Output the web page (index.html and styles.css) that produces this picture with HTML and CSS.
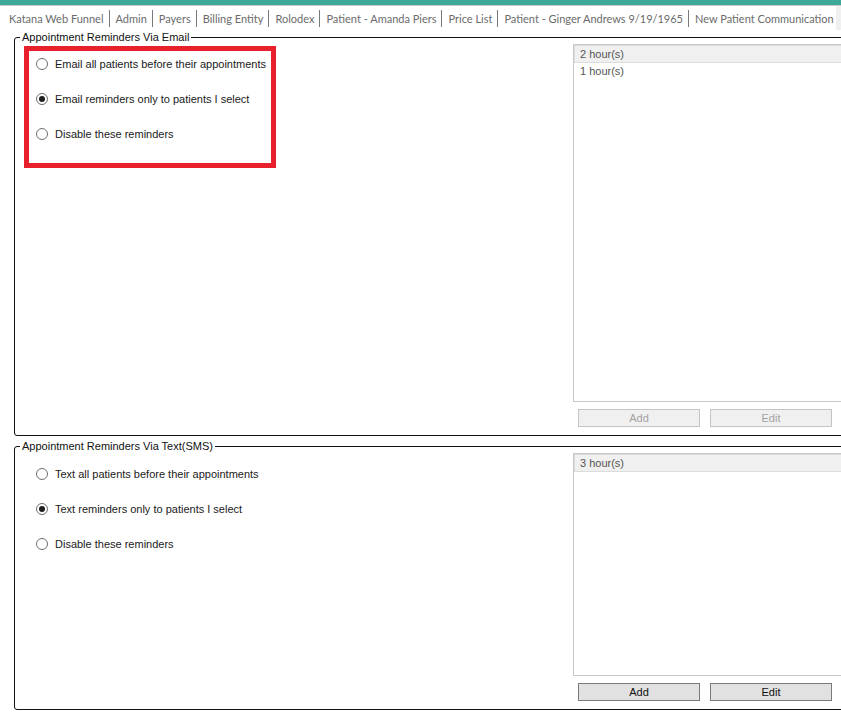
FILE: index.html
```html
<!DOCTYPE html>
<html>
<head>
<meta charset="utf-8">
<link rel="stylesheet" href="styles.css">
</head>
<body>
<div class="topbar"></div>
<div class="tabstrip">
  <div class="tabs">
    <span class="tab">Katana Web Funnel</span>
    <span class="tab">Admin</span>
    <span class="tab">Payers</span>
    <span class="tab">Billing Entity</span>
    <span class="tab">Rolodex</span>
    <span class="tab">Patient - Amanda Piers</span>
    <span class="tab">Price List</span>
    <span class="tab">Patient - Ginger Andrews 9/19/1965</span>
    <span class="tab last">New Patient Communication</span>
  </div>
  <div class="tab-rest"></div>
</div>
<main class="content">
  <fieldset class="group group-email">
    <legend>Appointment Reminders Via Email</legend>
    <div class="group-body">
      <div class="options">
        <div class="optbox highlight">
          <label class="opt"><span class="radio"></span>Email all patients before their appointments</label>
          <label class="opt"><span class="radio checked"></span>Email reminders only to patients I select</label>
          <label class="opt"><span class="radio"></span>Disable these reminders</label>
        </div>
      </div>
      <div class="side">
        <div class="list list-email">
          <div class="row selected">2 hour(s)</div>
          <div class="row">1 hour(s)</div>
        </div>
        <div class="buttons">
          <button class="btn" disabled>Add</button>
          <button class="btn" disabled>Edit</button>
        </div>
      </div>
    </div>
  </fieldset>
  <fieldset class="group group-sms">
    <legend>Appointment Reminders Via Text(SMS)</legend>
    <div class="group-body">
      <div class="options">
        <div class="optbox">
          <label class="opt"><span class="radio"></span>Text all patients before their appointments</label>
          <label class="opt"><span class="radio checked"></span>Text reminders only to patients I select</label>
          <label class="opt"><span class="radio"></span>Disable these reminders</label>
        </div>
      </div>
      <div class="side">
        <div class="list list-sms">
          <div class="row selected">3 hour(s)</div>
        </div>
        <div class="buttons">
          <button class="btn">Add</button>
          <button class="btn">Edit</button>
        </div>
      </div>
    </div>
  </fieldset>
</main>
</body>
</html>
```
FILE: styles.css
```css
html, body {
  margin: 0;
  padding: 0;
}
body {
  width: 841px;
  height: 713px;
  overflow: hidden;
  background: #ffffff;
  font-family: "Liberation Sans", Arial, sans-serif;
  font-size: 11px;
  color: #1a1a1a;
}
.topbar {
  height: 5px;
  background: #40a898;
  border-bottom: 1px solid #c9c9c9;
}
.tabstrip {
  display: flex;
  height: 24px;
}
.tabs {
  display: flex;
  align-items: center;
  padding-left: 3px;
  width: 833px;
  flex: none;
  overflow: hidden;
}
.tab {
  font-family: Lato, "Liberation Sans", sans-serif;
  font-size: 11px;
  color: #6b6b6b;
  padding: 0 5px 0 6px;
  border-right: 1px solid #7a7a7a;
  line-height: 17px;
  margin-top: 1px;
  white-space: nowrap;
}
.tab.last {
  border-right: none;
}
.tab-rest {
  flex: 1;
  background: #f0f0f0;
}
.content {
  padding: 1px 0 0 14px;
  display: flex;
  flex-direction: column;
  gap: 4px;
}
.group {
  margin: 0;
  padding: 0;
  min-width: 0;
  width: 840px;
  box-sizing: border-box;
  border: 1px solid #111;
  border-radius: 3px;
}
.group legend {
  margin-left: 5px;
  padding: 0 2px;
  font-size: 11px;
  line-height: 13px;
  color: #111;
}
.group-body {
  display: flex;
}
.options {
  width: 558px;
  flex: none;
  padding: 2px 0 0 9px;
  box-sizing: border-box;
}
.group-sms .options {
  padding-top: 3px;
}
.optbox {
  width: 252px;
  box-sizing: border-box;
  border: 5px solid transparent;
  padding: 6px 0 22px 7px;
  display: flex;
  flex-direction: column;
  gap: 21px;
}
.optbox.highlight {
  border-color: #e8202b;
}
.opt {
  display: flex;
  align-items: center;
  gap: 7px;
  height: 14px;
  white-space: nowrap;
}
.radio {
  width: 12px;
  height: 12px;
  box-sizing: border-box;
  border: 1px solid #6e6e6e;
  border-radius: 50%;
  background: #ffffff;
  display: flex;
  align-items: center;
  justify-content: center;
  flex: none;
}
.radio.checked::after {
  content: "";
  width: 6px;
  height: 6px;
  border-radius: 50%;
  background: #1e1e1e;
}
.side {
  width: 275px;
  flex: none;
  display: flex;
  flex-direction: column;
  gap: 7px;
}
.list {
  border: 1px solid #c8c8c8;
  border-right: none;
  box-sizing: border-box;
  padding: 0;
}
.list-email {
  height: 358px;
}
.list-sms {
  height: 223px;
}
.row {
  height: 18px;
  line-height: 17px;
  padding-left: 6px;
  color: #555;
  font-size: 11px;
  box-sizing: border-box;
}
.row.selected {
  background: #f0f0f0;
  border: 1px solid #dcdcdc;
  border-right: none;
  padding-left: 5px;
}
.buttons {
  display: flex;
  gap: 10px;
  padding-left: 5px;
}
.btn {
  width: 122px;
  height: 18px;
  box-sizing: border-box;
  padding: 0;
  font-family: "Liberation Sans", Arial, sans-serif;
  font-size: 11px;
  background: #e1e1e1;
  border: 1px solid #7a7a7a;
  color: #111;
}
.btn:disabled {
  background: #f0f0f0;
  border-color: #c4c4c4;
  color: #a3a3a3;
}
.group-email {
  height: 405px;
}
.group-sms {
  height: 270px;
}
```
